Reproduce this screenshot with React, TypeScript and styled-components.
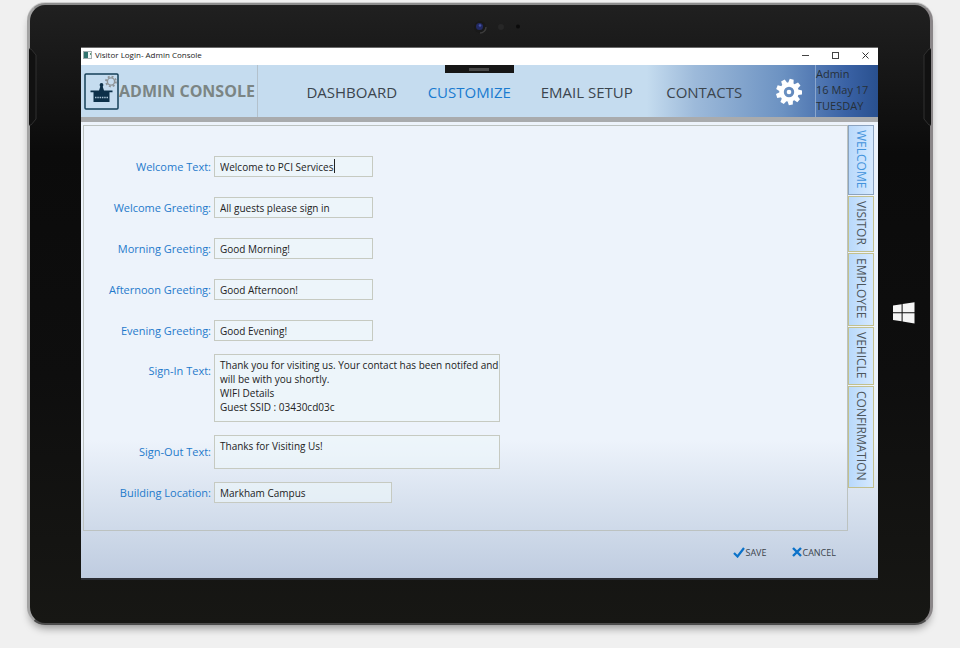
import React, { useState } from "react";
import styled, { createGlobalStyle } from "styled-components";

const GlobalStyle = createGlobalStyle`
  *, *::before, *::after { box-sizing: border-box; }
  body {
    margin: 0;
    background: #f0f0f0;
    font-family: "Open Sans", "Noto Sans", sans-serif;
    color: #222;
  }
  button, input, textarea { font: inherit; color: inherit; margin: 0; }
`;

const Stage = styled.div`
  padding: 3px 27px 22px;
`;

const Tablet = styled.div`
  position: relative;
  display: grid;
  grid-template-columns: 51px minmax(0, 1fr) 52px;
  grid-template-rows: 43px auto 45px;
  border: 3px solid;
  border-width: 2px 3px;
  border-color: #8d8d8d #8a8688 #4c4c4c #a3a3a3;
  border-radius: 18px;
  background: linear-gradient(#202020, #0b0b0b 24%, #0e0e0e 60%, #171714);
  box-shadow: 0 6px 9px -3px rgba(0, 0, 0, 0.4), 0 -1px 0 #d0d0d0;
`;

const TopBezel = styled.div`
  grid-column: 1 / -1;
  display: flex;
  justify-content: center;
  align-items: center;
`;

const Camera = styled.svg`
  width: 50px;
  height: 16px;
  margin-left: 37px;
`;

const RightBezel = styled.div`
  grid-column: 3;
  display: flex;
  align-items: center;
  justify-content: center;
`;

const HomeButton = styled.button`
  display: block;
  padding: 0;
  border: 0;
  background: none;
  line-height: 0;
`;

const Notch = styled.svg<{ $side: "left" | "right" }>`
  position: absolute;
  top: 43px;
  ${(p) => p.$side}: -1px;
  width: 8px;
  height: 80px;
  ${(p) => (p.$side === "right" ? "transform: scaleX(-1);" : "")}
`;

const Screen = styled.main`
  grid-column: 2;
  grid-row: 2;
  display: flex;
  flex-direction: column;
  background: linear-gradient(#edf3fb 0, #edf3fb 74%, #d0dbea 90%, #bfcce0);
  box-shadow: 0 2px 0 #2b2d33, 0 -1px 0 #6b6b6b;
`;

const TitleBar = styled.header`
  display: flex;
  align-items: center;
  height: 17px;
  padding: 0 8px 3px 2px;
  gap: 3px;
  background: #fff;
  font-size: 8px;
  line-height: 14px;
`;

const Title = styled.span`
  flex: 1;
`;

const WindowButton = styled.button`
  display: grid;
  place-items: center;
  width: 10px;
  height: 14px;
  margin-left: 17px;
  padding: 0;
  border: 0;
  background: none;
`;

const Banner = styled.div`
  position: relative;
  display: grid;
  grid-template-columns: 177px minmax(0, 1fr) 63px;
  height: 57px;
  border-bottom: 5px solid #a9abad;
  background: linear-gradient(90deg, #c5dcef 0, #c5dcef 71%, #9dbada 77%, #6c92c2 88%, #3a62a5 96%, #29508f);
`;

const PullTab = styled.div`
  position: absolute;
  top: 0;
  left: 50%;
  display: grid;
  place-items: center;
  width: 69px;
  height: 8px;
  margin-left: -35px;
  background: #161616;

  &::after {
    content: "";
    width: 20px;
    height: 3px;
    background: #484848;
  }
`;

const Brand = styled.h1`
  display: flex;
  align-items: center;
  margin: 0;
  padding-left: 3px;
  border-right: 1px solid #b3c1cc;
  color: #7b8584;
  font-size: 16px;
  font-weight: 700;
  line-height: 22px;
  white-space: nowrap;
`;

const Nav = styled.nav`
  display: grid;
  grid-template-columns: repeat(4, minmax(0, 1fr)) 52px;
  align-items: center;
  padding: 2px 0 0 35px;
`;

const NavLink = styled.a<{ $active?: boolean }>`
  color: ${(p) => (p.$active ? "#1a7bd0" : "#3b454e")};
  font-size: 15px;
  line-height: 22px;
  text-align: center;
  text-decoration: none;
  white-space: nowrap;
`;

const GearButton = styled.button`
  justify-self: center;
  padding: 0;
  border: 0;
  background: none;
  line-height: 0;
`;

const Status = styled.div`
  border-left: 1px solid #8aa6cd;
  color: #263039;
  font-size: 11px;
  line-height: 16px;
  padding-top: 1px;
  white-space: nowrap;
`;

const Workspace = styled.div`
  display: flex;
  align-items: stretch;
  padding: 3px 4px 0 2px;
`;

const Panel = styled.form`
  flex: 1;
  display: flex;
  flex-direction: column;
  gap: 13px;
  min-height: 406px;
  padding: 30px 0 26px;
  border: 1px solid #bcc2c0;
`;

const Row = styled.div<{ $spaced?: boolean }>`
  display: grid;
  grid-template-columns: 127px minmax(0, 286px);
  gap: 3px;
  align-items: center;
  margin-bottom: ${(p) => (p.$spaced ? 7 : 0)}px;
`;

const Label = styled.label<{ $top?: boolean }>`
  align-self: ${(p) => (p.$top ? "start" : "center")};
  padding-top: ${(p) => (p.$top ? 8 : 0)}px;
  color: #1f7acb;
  font-size: 11px;
  line-height: 18px;
  text-align: right;
  white-space: nowrap;
`;

const InputBox = styled.div<{ $wide?: boolean }>`
  position: relative;
  display: flex;
  width: ${(p) => (p.$wide ? 178 : 159)}px;
`;

const Input = styled.input`
  width: 100%;
  height: 21px;
  padding: 0 5px;
  border: 1px solid #c6cac1;
  border-radius: 0;
  background: rgba(236, 246, 250, 0.6);
  font-size: 10px;
  outline: none;
`;

const Caret = styled.span`
  position: absolute;
  top: 3px;
  left: 120px;
  width: 1px;
  height: 14px;
  background: #222;
`;

const TextArea = styled.textarea<{ $tall?: boolean }>`
  display: block;
  width: 100%;
  height: ${(p) => (p.$tall ? 68 : 34)}px;
  padding: 3px 0 3px 5px;
  border: 1px solid #c6cac1;
  border-radius: 0;
  background: rgba(236, 246, 250, 0.6);
  font-size: 10px;
  line-height: 14px;
  resize: none;
  overflow: hidden;
  outline: none;
`;

const Tabs = styled.div`
  display: flex;
  flex-direction: column;
  gap: 1px;
  width: 26px;
`;

const Tab = styled.button<{ $active: boolean }>`
  display: flex;
  align-items: center;
  padding: 4px 0 6px;
  border: 1px solid ${(p) => (p.$active ? "#8ba3bf" : "#c2c08e")};
  background: linear-gradient(90deg, #b9d9fb, #d5e9ff);
  color: ${(p) => (p.$active ? "#4394dc" : "#4d565c")};
  font-size: 12px;
  line-height: 24px;
  text-align: left;
  writing-mode: vertical-rl;
`;

const Footer = styled.footer`
  display: flex;
  justify-content: flex-end;
  gap: 26px;
  height: 47px;
  padding: 11px 42px 0 0;
`;

const Action = styled.button`
  display: flex;
  align-items: center;
  height: 20px;
  padding: 0;
  border: 0;
  background: none;
  color: #3c444c;
  font-size: 9px;
`;

function BrandIcon() {
  return (
    <svg width="35" height="37" viewBox="0 0 35 37" aria-hidden="true">
      <rect x="1" y="1" width="33" height="35" rx="1" fill="none" stroke="#143f58" strokeWidth="1.500" />
      <circle cx="27" cy="8.500" r="3.600" fill="none" stroke="#8f9497" strokeWidth="1.400" />
      <circle cx="27" cy="8.500" r="5" fill="none" stroke="#8f9497" strokeWidth="1.800" strokeDasharray="1.960 1.960" />
      <circle cx="17.500" cy="12" r="1.900" fill="#0c3049" />
      <path d="M16.500 13h2l1.500 4.500h8.500v1.700h-3V29H9.500v-9.800h-3v-1.700H15z" fill="#0c3049" />
      <path d="M11 24.500h13" stroke="#a9c3d5" strokeWidth="1.500" strokeDasharray="1.500 0.800" />
    </svg>
  );
}

function GearIcon() {
  const teeth = Array.from({ length: 9 }, (_, i) => i * 40 + 12);
  return (
    <svg width="26" height="28" viewBox="-13 -14 26 28" aria-hidden="true">
      <circle r="7.500" fill="none" stroke="#fff" strokeWidth="4.600" />
      <circle r="2.300" fill="#fff" />
      {teeth.map((a) => (
        <path key={a} d="M-2.700 -9 -2 -13H2L2.700 -9z" fill="#fff" transform={`rotate(${a})`} />
      ))}
    </svg>
  );
}

function NotchOutline({ side }: { side: "left" | "right" }) {
  return (
    <Notch $side={side} viewBox="0 0 8 80" aria-hidden="true">
      <path d="M0 1h2l5 6v64l-5 6H0" fill="#111" stroke="#303030" />
    </Notch>
  );
}

const greetings = [
  { id: "welcome-text", label: "Welcome Text:", value: "Welcome to PCI Services", caret: true },
  { id: "welcome-greeting", label: "Welcome Greeting:", value: "All guests please sign in" },
  { id: "morning", label: "Morning Greeting:", value: "Good Morning!" },
  { id: "afternoon", label: "Afternoon Greeting:", value: "Good Afternoon!" },
  { id: "evening", label: "Evening Greeting:", value: "Good Evening!" },
];

const signInText =
  "Thank you for visiting us. Your contact has been notifed and will be with you shortly.\nWIFI Details\nGuest SSID : 03430cd03c";

const pages = ["DASHBOARD", "CUSTOMIZE", "EMAIL SETUP", "CONTACTS"];
const sections = ["WELCOME", "VISITOR", "EMPLOYEE", "VEHICLE", "CONFIRMATION"];

export default function App() {
  const [section, setSection] = useState("WELCOME");

  return (
    <>
      <GlobalStyle />
      <Stage>
        <Tablet>
          <NotchOutline side="left" />
          <NotchOutline side="right" />
          <TopBezel>
            <Camera viewBox="0 0 50 16" aria-hidden="true">
              <circle cx="6" cy="8" r="6" fill="#191919" />
              <path d="M12 8a6 6 0 0 1-6 6" fill="none" stroke="#3c3c3c" strokeWidth="1.500" />
              <circle cx="5.500" cy="7.500" r="3.500" fill="#232a62" />
              <circle cx="6" cy="6.500" r="1.300" fill="#4554a8" />
              <circle cx="27" cy="8" r="3" fill="#272727" />
              <circle cx="44" cy="7.500" r="2" fill="#0b0b0b" />
            </Camera>
          </TopBezel>

          <Screen>
            <TitleBar>
              <svg width="9" height="8" viewBox="0 0 9 8" aria-hidden="true">
                <rect x="0.500" y="0.500" width="8" height="7" fill="#f2f5f5" stroke="#a5afb2" />
                <rect x="1" y="1" width="4" height="6" fill="#32736f" />
                <rect x="7" y="2" width="1" height="2" fill="#5c9a78" />
              </svg>
              <Title>Visitor Login- Admin Console</Title>
              <WindowButton aria-label="Minimize">
                <svg width="7" height="7"><path d="M0 3.500h7" stroke="#444" /></svg>
              </WindowButton>
              <WindowButton aria-label="Maximize">
                <svg width="7" height="7"><rect x="0.500" y="0.500" width="6" height="6" fill="none" stroke="#444" /></svg>
              </WindowButton>
              <WindowButton aria-label="Close">
                <svg width="7" height="7"><path d="m0.500 0.500 6 6m0-6-6 6" stroke="#333" /></svg>
              </WindowButton>
            </TitleBar>

            <Banner>
              <Brand><BrandIcon />ADMIN CONSOLE</Brand>
              <Nav>
                {pages.map((p) => (
                  <NavLink key={p} href={`#${p.toLowerCase().replace(" ", "-")}`} $active={p === "CUSTOMIZE"}>{p}</NavLink>
                ))}
                <GearButton aria-label="Settings"><GearIcon /></GearButton>
              </Nav>
              <Status>Admin<br />16 May 17<br />TUESDAY</Status>
              <PullTab />
            </Banner>

            <Workspace>
              <Panel id="greeting-form" onSubmit={(e) => e.preventDefault()}>
                {greetings.map((g, i) => (
                  <Row key={g.id} $spaced={i < greetings.length - 1}>
                    <Label htmlFor={g.id}>{g.label}</Label>
                    <InputBox>
                      <Input id={g.id} defaultValue={g.value} />
                      {g.caret && <Caret />}
                    </InputBox>
                  </Row>
                ))}
                <Row>
                  <Label htmlFor="sign-in" $top>Sign-In Text:</Label>
                  <TextArea id="sign-in" $tall spellCheck={false} defaultValue={signInText} />
                </Row>
                <Row>
                  <Label htmlFor="sign-out">Sign-Out Text:</Label>
                  <TextArea id="sign-out" defaultValue="Thanks for Visiting Us!" />
                </Row>
                <Row>
                  <Label htmlFor="building">Building Location:</Label>
                  <InputBox $wide><Input id="building" defaultValue="Markham Campus" /></InputBox>
                </Row>
              </Panel>
              <Tabs role="tablist" aria-orientation="vertical">
                {sections.map((s) => (
                  <Tab key={s} role="tab" aria-selected={s === section} $active={s === section} onClick={() => setSection(s)}>{s}</Tab>
                ))}
              </Tabs>
            </Workspace>

            <Footer>
              <Action type="submit" form="greeting-form">
                <svg width="12" height="11" viewBox="0 0 12 11" aria-hidden="true">
                  <path d="m1 6 3.500 3.500L11 1" fill="none" stroke="#0b72c9" strokeWidth="2.200" />
                </svg>
                SAVE
              </Action>
              <Action type="reset" form="greeting-form">
                <svg width="10" height="10" viewBox="0 0 10 10" aria-hidden="true">
                  <path d="m1 1 8 8m0-8-8 8" fill="none" stroke="#0b72c9" strokeWidth="2.400" />
                </svg>
                CANCEL
              </Action>
            </Footer>
          </Screen>

          <RightBezel>
            <HomeButton aria-label="Home">
              <svg width="22" height="22" viewBox="0 0 22 22" aria-hidden="true">
                <path d="M0 3.600 8.600 2.200V10.200H0zM9.600 2 21.500 0.200V10.200H9.600zM0 11.200h8.600v8.100L0 18.100zM9.600 11.200h11.900v10.300L9.600 19.500z" fill="#f5f5f5" />
              </svg>
            </HomeButton>
          </RightBezel>
        </Tablet>
      </Stage>
    </>
  );
}
